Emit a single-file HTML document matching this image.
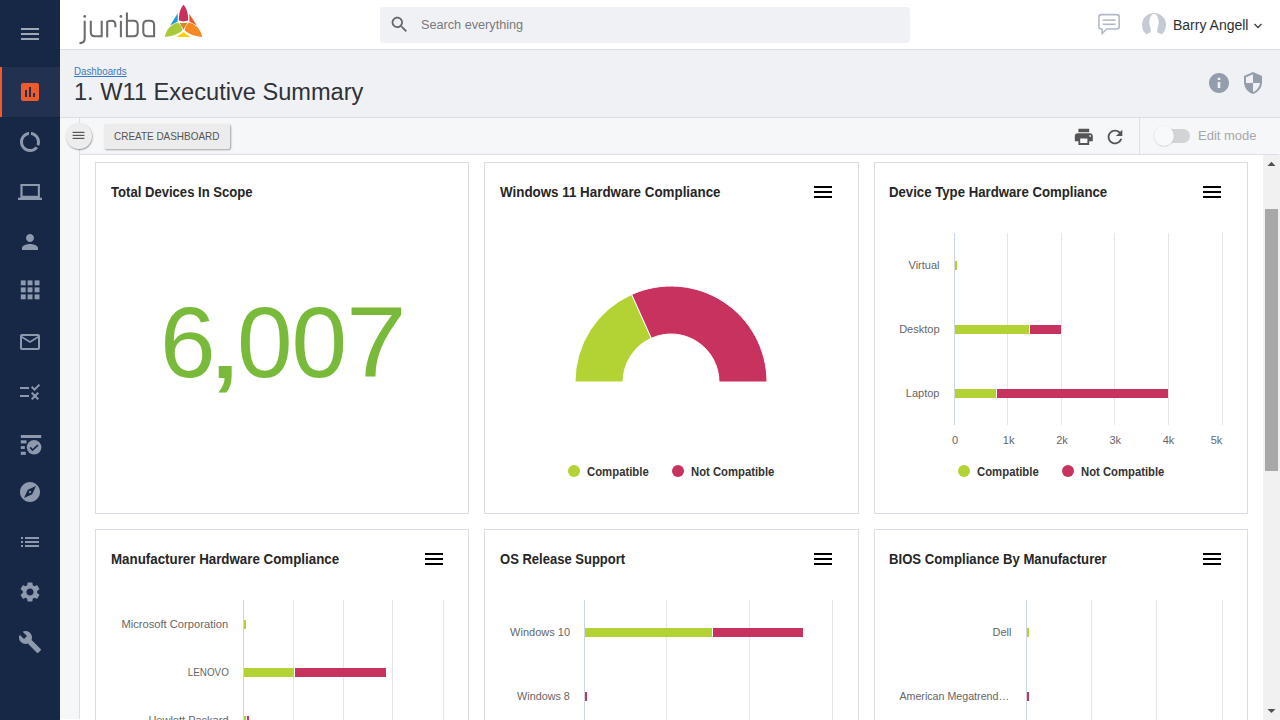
<!DOCTYPE html>
<html><head><meta charset="utf-8">
<style>
*{box-sizing:border-box;margin:0;padding:0}
html,body{width:1280px;height:720px;overflow:hidden;background:#fff;font-family:"Liberation Sans",sans-serif}
.abs{position:absolute}
#sidebar{position:absolute;left:0;top:0;width:60px;height:720px;background:#162846}
#sidebar svg{position:absolute;left:18px;width:24px;height:24px;fill:#8e99ae}
#active{position:absolute;left:0;top:67px;width:60px;height:50px;background:#22314f}
#active .bar{position:absolute;left:0;top:0;width:2px;height:50px;background:#f15a2b}
#header{position:absolute;left:60px;top:0;width:1220px;height:50px;background:#fff;border-bottom:1px solid #dcdde3}
#titlebar{position:absolute;left:60px;top:50px;width:1220px;height:68px;background:#eff1f5;border-bottom:1px solid #dcdde3}
#toolbar{position:absolute;left:60px;top:118px;width:1220px;height:601px;background:#f6f7f9}
#content{position:absolute;left:79px;top:155px;width:1184px;height:564px;background:#fff;border-left:1px solid #dcdfe5}
#tbline{position:absolute;left:79px;top:154px;width:1200px;height:1px;background:#dcdfe5}
.card{position:absolute;background:#fff;border:1px solid #dcdde4}
.ttl{position:absolute;font-weight:700;font-size:14px;color:#262626;white-space:nowrap;transform-origin:0 0}
.menu{position:absolute;width:18px;height:12px}
.menu i{position:absolute;left:0;width:18px;height:2px;background:#000}
.lbl{position:absolute;font-size:12px;color:#666;white-space:nowrap}
.grid{position:absolute;width:1px;background:#e6e6e6}
.axis{position:absolute;width:1px;background:#ccd6eb}
.bar{position:absolute}
.big{font-size:100px;color:#7aba3b;line-height:115px}
.g{background:#b3d234}
.r{background:#c8325e}
</style></head><body>

<div id="sidebar">
  <!-- menu -->
  <svg style="top:22px;fill:#a0a8b8" viewBox="0 0 24 24"><path d="M3 18h18v-2H3v2zm0-5h18v-2H3v2zm0-7v2h18V6H3z"/></svg>
  <div id="active"><div class="bar"></div></div>
  <svg style="top:80px;fill:#f15a2b" viewBox="0 0 24 24"><path d="M19 3H5c-1.1 0-2 .9-2 2v14c0 1.1.9 2 2 2h14c1.1 0 2-.9 2-2V5c0-1.1-.9-2-2-2zM9 17H7v-7h2v7zm4 0h-2V7h2v10zm4 0h-2v-4h2v4z"/></svg>
  <svg style="top:130px" viewBox="0 0 24 24"><path d="M13 2.05v3.03c3.39.49 6 3.39 6 6.92 0 .9-.18 1.75-.48 2.54l2.6 1.53c.56-1.24.88-2.62.88-4.07 0-5.18-3.95-9.45-9-9.95zM12 19c-3.87 0-7-3.13-7-7 0-3.530 2.61-6.430 6-6.920V2.05c-5.06.5-9 4.76-9 9.950 0 5.52 4.47 10 9.99 10 3.31 0 6.24-1.61 8.06-4.09l-2.6-1.53C16.17 17.98 14.21 19 12 19z"/></svg>
  <svg style="top:180px" viewBox="0 0 24 24"><path fill-rule="evenodd" d="M2.4 4h19.5v14H2.4z M4.6 6v9.8h15.2V6z"/><path d="M0 17.7h24V20H0z"/></svg>
  <svg style="top:230px" viewBox="0 0 24 24"><path d="M12 12c2.21 0 4-1.79 4-4s-1.790-4-4-4-4 1.79-4 4 1.79 4 4 4zm0 2c-2.67 0-8 1.34-8 4v2h16v-2c0-2.66-5.33-4-8-4z"/></svg>
  <svg style="top:276px;left:16px;width:28px;height:28px" viewBox="0 0 28 28"><rect x="4.8" y="4.4" width="4.9" height="4.9"/><rect x="11.6" y="4.4" width="4.9" height="4.9"/><rect x="18.6" y="4.4" width="4.9" height="4.9"/><rect x="4.8" y="11.4" width="4.9" height="4.9"/><rect x="11.6" y="11.4" width="4.9" height="4.9"/><rect x="18.6" y="11.4" width="4.9" height="4.9"/><rect x="4.8" y="18.4" width="4.9" height="4.9"/><rect x="11.6" y="18.4" width="4.9" height="4.9"/><rect x="18.6" y="18.4" width="4.9" height="4.9"/></svg>
  <svg style="top:330px" viewBox="0 0 24 24"><path d="M20 4H4c-1.1 0-1.99.9-1.99 2L2 18c0 1.1.9 2 2 2h16c1.1 0 2-.9 2-2V6c0-1.1-.9-2-2-2zm0 14H4V8l8 5 8-5v10zm-8-7L4 6h16l-8 5z"/></svg>
  <svg style="top:380px" viewBox="0 0 24 24"><path d="M16.54 11L13 7.46l1.41-1.41 2.12 2.12 4.24-4.24 1.41 1.41L16.54 11zM11 7H2v2h9V7zm10 6.41L19.59 12 17 14.59 14.41 12 13 13.41 15.59 16 13 18.59 14.41 20 17 17.41 19.59 20 21 18.59 18.41 16 21 13.41zM11 15H2v2h9v-2z"/></svg>
  <svg style="top:428px;left:15px;width:30px;height:30px" viewBox="0 0 30 30"><rect x="5.8" y="7" width="20.4" height="3"/><rect x="5.8" y="12.3" width="5.7" height="3.1"/><rect x="5.8" y="18.1" width="4" height="2.9"/><rect x="5.8" y="23.75" width="5" height="3.1"/><circle cx="19.1" cy="19.3" r="7.3"/><path d="M15.2 19.4l2.3 2.6 5.4-4.9" fill="none" stroke="#162846" stroke-width="1.6"/></svg>
  <svg style="top:480px" viewBox="0 0 24 24"><path d="M12 10.9c-.61 0-1.1.49-1.1 1.1s.49 1.1 1.1 1.1c.61 0 1.1-.49 1.1-1.1s-.49-1.1-1.1-1.1zM12 2C6.48 2 2 6.48 2 12s4.48 10 10 10 10-4.48 10-10S17.52 2 12 2zm2.19 12.19L6 18l3.81-8.19L18 6l-3.81 8.19z"/></svg>
  <svg style="top:530px" viewBox="0 0 24 24"><path d="M3 13h2v-2H3v2zm0 4h2v-2H3v2zm0-8h2V7H3v2zm4 4h14v-2H7v2zm0 4h14v-2H7v2zM7 7v2h14V7H7z"/></svg>
  <svg style="top:580px" viewBox="0 0 24 24"><path d="M19.14 12.94c.04-.3.06-.61.06-.94 0-.32-.02-.64-.07-.94l2.03-1.58c.18-.14.23-.41.12-.61l-1.92-3.32c-.12-.22-.37-.29-.59-.22l-2.39.96c-.5-.38-1.03-.7-1.62-.94l-.36-2.54c-.04-.24-.24-.41-.48-.41h-3.84c-.24 0-.43.17-.47.41l-.36 2.54c-.59.24-1.13.57-1.62.94l-2.39-.96c-.22-.08-.47 0-.59.22L2.74 8.87c-.12.21-.08.47.12.61l2.03 1.58c-.05.3-.09.63-.09.94s.02.64.07.94l-2.03 1.58c-.18.14-.23.41-.12.61l1.92 3.32c.12.22.37.29.59.22l2.39-.96c.5.38 1.03.7 1.62.94l.36 2.54c.05.24.24.41.48.41h3.84c.24 0 .44-.17.47-.41l.36-2.54c.59-.24 1.13-.56 1.62-.94l2.39.96c.22.08.47 0 .59-.22l1.92-3.32c.12-.22.07-.47-.12-.61l-2.01-1.58zM12 15.6c-1.98 0-3.6-1.62-3.6-3.6s1.62-3.6 3.6-3.6 3.6 1.62 3.6 3.6-1.62 3.6-3.6 3.6z"/></svg>
  <svg style="top:630px" viewBox="0 0 24 24"><path d="M22.7 19l-9.1-9.1c.9-2.3.4-5-1.5-6.9-2-2-5-2.4-7.4-1.3L9 6 6 9 1.6 4.7C.4 7.1.9 10.1 2.9 12.1c1.9 1.9 4.6 2.4 6.9 1.5l9.1 9.1c.4.4 1 .4 1.4 0l2.3-2.3c.5-.4.5-1.100.1-1.400z"/></svg>
</div>

<div id="header">
  <svg class="abs" style="left:0;top:0" width="160" height="50" viewBox="60 0 160 50">
    <g fill="none" stroke="#6b6c6f" stroke-width="2.05" stroke-linecap="butt">
      <path d="M84.7 20.8V38.5c0 3-1.8 4.6-5.2 4.6"/>
      <path d="M90.8 20.8V32.2c0 2.6 1.4 4 4 4H101.7M101.7 20.8V37.3"/>
      <path d="M107.2 37.3V21.8c1.5-.8 3-1 4.2-1 2.6 0 4 1.6 4 4.3V27.3"/>
      <path d="M120.9 20.8V37.3"/>
      <path d="M126.9 12.6V36.2h6.6c2.6 0 4.2-1.6 4.2-4.2V25c0-2.6-1.6-4.2-4.2-4.2H126.9"/>
      <path d="M154.1 37.3V25c0-2.6-1.6-4.2-4.2-4.2H147.5c-2.6 0-4.2 1.6-4.2 4.2V32c0 2.6 1.6 4.2 4.2 4.2H154.1"/>
    </g>
    <circle cx="84.7" cy="16.4" r="1.35" fill="#6b6c6f"/>
    <circle cx="120.9" cy="16.4" r="1.35" fill="#6b6c6f"/>
    <polygon points="177.7,13.3 170.2,25.6 177.7,21.6" fill="#1b9ad6"/>
    <polygon points="189.3,13.7 196.8,25.6 189.3,21.6" fill="#ef5b2d"/>
    <polygon points="176.6,36.9 190.4,36.9 183.5,31.9" fill="#fdd300"/>
    <path d="M183.5 4.8C180 9 178.7 14 178.9 20.6Q183.5 22.2 188.1 20.6C188.3 14 187 9 183.5 4.8Z" fill="#c8305f"/>
    <path d="M179.4 22.4Q183.5 23.6 187.6 22.4L183.5 29.8Z" fill="#d18a22"/>
    <path d="M164.8 36.9C166.5 29 171.5 24.3 178.1 22.6C180.6 24.8 181.9 27.4 182.4 30.4C178 34.3 172 36.5 164.8 36.9Z" fill="#a8c93a"/>
    <path d="M202.2 36.9C200.5 29 195.5 24.3 188.9 22.6C186.4 24.8 185.1 27.4 184.6 30.4C189 34.3 195 36.5 202.2 36.9Z" fill="#f58a23"/>
  </svg>
  <div class="abs" style="left:320px;top:7px;width:530px;height:36px;background:#eff1f5;border-radius:3px"></div>
  <svg class="abs" style="left:329.3px;top:14px" width="21" height="21" viewBox="0 0 24 24"><path fill="#666" d="M15.5 14h-.79l-.28-.27C15.41 12.59 16 11.11 16 9.5 16 5.91 13.09 3 9.5 3S3 5.91 3 9.5 5.910 16 9.5 16c1.61 0 3.09-.59 4.23-1.57l.27.28v.79l5 4.99L20.49 19l-4.99-5zm-6 0C7.01 14 5 11.99 5 9.5S7.01 5 9.5 5 14 7.01 14 9.5 11.99 14 9.5 14z"/></svg>
  <div class="abs" style="left:361px;top:17px;font-size:13px;color:#7a7a7a;white-space:nowrap;transform:scaleX(.975);transform-origin:0 0">Search everything</div>
  <svg class="abs" style="left:1036px;top:13px" width="26" height="23" viewBox="0 0 26 23"><path d="M5.4 1.6h15.3c1.5 0 2.5 1 2.5 2.5v9.4c0 1.5-1 2.5-2.5 2.5H10.6L6 20.8V16H5.4c-1.5 0-2.5-1-2.5-2.5V4.1c0-1.5 1-2.5 2.5-2.5Z" fill="none" stroke="#b3bac7" stroke-width="1.6" stroke-linejoin="round"/><rect x="6.7" y="6.3" width="12.9" height="1.6" fill="#b3bac7"/><rect x="6.7" y="10.5" width="12.9" height="1.6" fill="#b3bac7"/></svg>
  <svg class="abs" style="left:1080px;top:10px" width="28" height="28" viewBox="0 0 28 28"><circle cx="14" cy="15" r="12" fill="#c5cbd5"/><ellipse cx="14" cy="12.2" rx="4.7" ry="8.1" fill="#fff"/><rect x="10.7" y="15" width="6.6" height="9" fill="#fff"/><ellipse cx="14" cy="30.5" rx="11.5" ry="8.3" fill="#fff"/></svg>
  <div class="abs" style="left:1113px;top:16.5px;font-size:14px;color:#2b2f36;white-space:nowrap">Barry Angell</div>
  <svg class="abs" style="left:1193px;top:22px" width="10" height="8" viewBox="0 0 10 8"><path d="M1.5 2l3.5 3.5L8.5 2" fill="none" stroke="#444" stroke-width="1.4"/></svg>
</div>
<div id="titlebar">
  <div class="abs" style="left:14px;top:15px;font-size:10.5px;color:#3b78c4;text-decoration:underline;white-space:nowrap;transform:scaleX(.93);transform-origin:0 0">Dashboards</div>
  <div class="abs" style="left:14px;top:29px;font-size:23px;color:#2f3237;white-space:nowrap;transform:scaleX(1.026);transform-origin:0 0">1. W11 Executive Summary</div>
  <svg class="abs" style="left:1147px;top:21px" width="24" height="24" viewBox="0 0 24 24"><path fill="#949dab" d="M12 2C6.48 2 2 6.480 2 12s4.48 10 10 10 10-4.48 10-10S17.52 2 12 2zm1.3 15h-2.6v-6h2.6v6zm0-8h-2.6V6.8h2.6V9z"/></svg>
  <svg class="abs" style="left:1181px;top:21px" width="24" height="24" viewBox="0 0 24 24"><path fill="#949dab" d="M12 1L3 5v6c0 5.55 3.84 10.74 9 12 5.16-1.26 9-6.45 9-12V5l-9-4zm0 10.99h7c-.53 4.12-3.28 7.79-7 8.94V12H5V6.3l7-3.11v8.8z"/></svg>
</div>
<div id="toolbar">
  <div class="abs" style="left:19px;top:0;width:1px;height:37px;background:#dcdfe5"></div>
  <div class="abs" style="left:6px;top:5px;width:25.5px;height:25.5px;border-radius:50%;background:#ededed;box-shadow:0.5px 1px 1.5px rgba(0,0,0,.38)"></div>
  <svg class="abs" style="left:12px;top:12px" width="13" height="10" viewBox="0 0 13 10"><rect x="0.6" y="1.8" width="11.8" height="1.2" fill="#555"/><rect x="0.6" y="4.8" width="11.8" height="1.2" fill="#555"/><rect x="0.6" y="7.8" width="11.8" height="1.2" fill="#555"/></svg>
  <div class="abs" style="left:44px;top:6px;width:126px;height:25px;background:#ececec;border-radius:2px;box-shadow:1px 1px 2px rgba(0,0,0,.35)"></div>
  <div class="abs" style="left:54px;top:12px;font-size:11px;color:#555;white-space:nowrap;transform:scaleX(.905);transform-origin:0 0">CREATE DASHBOARD</div>
  <svg class="abs" style="left:1013px;top:7.5px" width="21.6" height="21.6" viewBox="0 0 24 24"><path fill="#555" d="M19 8H5c-1.66 0-3 1.340-3 3v6h4v4h12v-4h4v-6c0-1.66-1.34-3-3-3zm-3 11H8v-5h8v5zm3-7c-.55 0-1-.45-1-1s.45-1 1-1 1 .45 1 1-.45 1-1 1zm-1-9H6v4h12V3z"/></svg>
  <svg class="abs" style="left:1044px;top:8px" width="22" height="22" viewBox="0 0 24 24"><path fill="#555" d="M17.65 6.35C16.2 4.9 14.21 4 12 4c-4.42 0-7.99 3.58-7.99 8s3.57 8 7.99 8c3.73 0 6.84-2.55 7.73-6h-2.08c-.82 2.33-3.04 4-5.65 4-3.31 0-6-2.69-6-6s2.69-6 6-6c1.66 0 3.14.69 4.22 1.78L13 11h7V4l-2.35 2.35z"/></svg>
  <div class="abs" style="left:1079px;top:0;width:1px;height:37px;background:#dcdfe5"></div>
  <div class="abs" style="left:1096px;top:11px;width:34px;height:14px;border-radius:7px;background:#d3d4d6"></div>
  <div class="abs" style="left:1094px;top:8px;width:20px;height:20px;border-radius:50%;background:#f8f9fa;box-shadow:0 0.5px 1.5px rgba(0,0,0,.2)"></div>
  <div class="abs" style="left:1138px;top:10px;font-size:13px;color:#a8a8a8;white-space:nowrap">Edit mode</div>
</div>
<div id="content"></div>
<div id="tbline"></div>
<!--CARDS-->
<div class="card" style="left:95px;top:162px;width:374px;height:352px"></div>
<div class="card" style="left:484px;top:162px;width:375px;height:352px"></div>
<div class="card" style="left:874px;top:162px;width:374px;height:352px"></div>
<div class="card" style="left:95px;top:529px;width:374px;height:260px"></div>
<div class="card" style="left:484px;top:529px;width:375px;height:260px"></div>
<div class="card" style="left:874px;top:529px;width:374px;height:260px"></div>
<div class="ttl" style="left:111px;top:184px;transform:scaleX(0.935)">Total Devices In Scope</div>
<div class="abs big" style="left:160px;top:285px;">6</div>
<div class="abs big" style="left:210.5px;top:285px;transform:scale(1.35,1.12);transform-origin:50% 75%;">,</div>
<div class="abs big" style="left:237px;top:285px;">0</div>
<div class="abs big" style="left:291.5px;top:285px;">0</div>
<div class="abs big" style="left:345.5px;top:285px;transform:scaleX(1.09);transform-origin:0 0;">7</div>
<div class="ttl" style="left:500px;top:184px;transform:scaleX(0.955)">Windows 11 Hardware Compliance</div>
<div class="menu" style="left:814px;top:186px"><i style="top:0"></i><i style="top:5px"></i><i style="top:10px"></i></div>
<svg class="abs" style="left:0;top:0" width="1280" height="720" viewBox="0 0 1280 720">
<path d="M575 382 A96 96 0 0 1 631.65 294.44 L651.32 338.22 A48 48 0 0 0 623 382 Z" fill="#b3d234" stroke="#fff" stroke-width="1" stroke-linejoin="round"/>
<path d="M631.65 294.44 A96 96 0 0 1 767 382 L719 382 A48 48 0 0 0 651.32 338.22 Z" fill="#c8325e" stroke="#fff" stroke-width="1" stroke-linejoin="round"/>
</svg>
<div class="abs" style="left:568px;top:465px;width:12px;height:12px;border-radius:50%;background:#b3d234"></div>
<div class="lbl" style="left:587px;top:465px;font-size:12px;font-weight:700;color:#333;transform:scaleX(.945);transform-origin:0 0">Compatible</div>
<div class="abs" style="left:671.5px;top:465px;width:12px;height:12px;border-radius:50%;background:#c8325e"></div>
<div class="lbl" style="left:690.8px;top:465px;font-size:12px;font-weight:700;color:#333;transform:scaleX(.94);transform-origin:0 0">Not Compatible</div>
<div class="ttl" style="left:889px;top:184px;transform:scaleX(0.942)">Device Type Hardware Compliance</div>
<div class="menu" style="left:1203px;top:186px"><i style="top:0"></i><i style="top:5px"></i><i style="top:10px"></i></div>
<div class="abs" style="left:954px;top:232.5px;width:1px;height:192.5px;background:#ccd6eb"></div>
<div class="abs" style="left:1007px;top:232.5px;width:1px;height:192.5px;background:#e6e6e6"></div>
<div class="abs" style="left:1061px;top:232.5px;width:1px;height:192.5px;background:#e6e6e6"></div>
<div class="abs" style="left:1114px;top:232.5px;width:1px;height:192.5px;background:#e6e6e6"></div>
<div class="abs" style="left:1168px;top:232.5px;width:1px;height:192.5px;background:#e6e6e6"></div>
<div class="abs" style="left:1222px;top:232.5px;width:1px;height:192.5px;background:#e6e6e6"></div>
<div class="lbl" style="left:925px;width:60px;text-align:center;top:434px;font-size:11px;color:#666">0</div>
<div class="lbl" style="left:978.6px;width:60px;text-align:center;top:434px;font-size:11px;color:#666">1k</div>
<div class="lbl" style="left:1032px;width:60px;text-align:center;top:434px;font-size:11px;color:#666">2k</div>
<div class="lbl" style="left:1085.2px;width:60px;text-align:center;top:434px;font-size:11px;color:#666">3k</div>
<div class="lbl" style="left:1138.5px;width:60px;text-align:center;top:434px;font-size:11px;color:#666">4k</div>
<div class="lbl" style="left:1186.5px;width:60px;text-align:center;top:434px;font-size:11px;color:#666">5k</div>
<div class="lbl" style="right:340.5px;top:259px;font-size:11px;color:#666;transform:scaleX(1.0);transform-origin:100% 0">Virtual</div>
<div class="lbl" style="right:340.5px;top:323px;font-size:11px;color:#666;transform:scaleX(1.0);transform-origin:100% 0">Desktop</div>
<div class="lbl" style="right:340.5px;top:387px;font-size:11px;color:#666;transform:scaleX(1.0);transform-origin:100% 0">Laptop</div>
<div class="abs" style="left:955px;top:261px;width:2.2px;height:9px;background:#b3d234"></div>
<div class="abs" style="left:955px;top:325px;width:74px;height:9px;background:#b3d234"></div>
<div class="abs" style="left:1030px;top:325px;width:31px;height:9px;background:#c8325e"></div>
<div class="abs" style="left:955px;top:389px;width:41.3px;height:9px;background:#b3d234"></div>
<div class="abs" style="left:997px;top:389px;width:171px;height:9px;background:#c8325e"></div>
<div class="abs" style="left:958px;top:465px;width:12px;height:12px;border-radius:50%;background:#b3d234"></div>
<div class="lbl" style="left:977px;top:465px;font-size:12px;font-weight:700;color:#333;transform:scaleX(.945);transform-origin:0 0">Compatible</div>
<div class="abs" style="left:1061.5px;top:465px;width:12px;height:12px;border-radius:50%;background:#c8325e"></div>
<div class="lbl" style="left:1080.8px;top:465px;font-size:12px;font-weight:700;color:#333;transform:scaleX(.94);transform-origin:0 0">Not Compatible</div>
<div class="ttl" style="left:111px;top:551px;transform:scaleX(0.952)">Manufacturer Hardware Compliance</div>
<div class="menu" style="left:424.5px;top:553px"><i style="top:0"></i><i style="top:5px"></i><i style="top:10px"></i></div>
<div class="abs" style="left:243px;top:600px;width:1px;height:120px;background:#ccd6eb"></div>
<div class="abs" style="left:293px;top:600px;width:1px;height:120px;background:#e6e6e6"></div>
<div class="abs" style="left:343px;top:600px;width:1px;height:120px;background:#e6e6e6"></div>
<div class="abs" style="left:392px;top:600px;width:1px;height:120px;background:#e6e6e6"></div>
<div class="abs" style="left:443px;top:600px;width:1px;height:120px;background:#e6e6e6"></div>
<div class="lbl" style="right:1051.5px;top:618px;font-size:11px;color:#666;transform:scaleX(1.015);transform-origin:100% 0">Microsoft Corporation</div>
<div class="lbl" style="right:1051.5px;top:666px;font-size:11px;color:#666;transform:scaleX(0.895);transform-origin:100% 0">LENOVO</div>
<div class="lbl" style="right:1051.5px;top:714px;font-size:11px;color:#666;transform:scaleX(1.0);transform-origin:100% 0">Hewlett Packard</div>
<div class="abs" style="left:244px;top:620px;width:2px;height:9px;background:#b3d234"></div>
<div class="abs" style="left:244px;top:668px;width:50px;height:9px;background:#b3d234"></div>
<div class="abs" style="left:295px;top:668px;width:91px;height:9px;background:#c8325e"></div>
<div class="abs" style="left:244px;top:716px;width:2px;height:9px;background:#b3d234"></div>
<div class="abs" style="left:247px;top:716px;width:2px;height:9px;background:#c8325e"></div>
<div class="ttl" style="left:500px;top:551px;transform:scaleX(0.93)">OS Release Support</div>
<div class="menu" style="left:813.5px;top:553px"><i style="top:0"></i><i style="top:5px"></i><i style="top:10px"></i></div>
<div class="abs" style="left:584px;top:600px;width:1px;height:120px;background:#ccd6eb"></div>
<div class="abs" style="left:666px;top:600px;width:1px;height:120px;background:#e6e6e6"></div>
<div class="abs" style="left:749px;top:600px;width:1px;height:120px;background:#e6e6e6"></div>
<div class="abs" style="left:832px;top:600px;width:1px;height:120px;background:#e6e6e6"></div>
<div class="lbl" style="right:710px;top:626px;font-size:11px;color:#666;transform:scaleX(1.0);transform-origin:100% 0">Windows 10</div>
<div class="lbl" style="right:710px;top:689.5px;font-size:11px;color:#666;transform:scaleX(0.98);transform-origin:100% 0">Windows 8</div>
<div class="abs" style="left:585px;top:628px;width:127px;height:9px;background:#b3d234"></div>
<div class="abs" style="left:713px;top:628px;width:90px;height:9px;background:#c8325e"></div>
<div class="abs" style="left:585px;top:692px;width:2px;height:9px;background:#c8325e"></div>
<div class="ttl" style="left:889px;top:551px;transform:scaleX(0.939)">BIOS Compliance By Manufacturer</div>
<div class="menu" style="left:1203px;top:553px"><i style="top:0"></i><i style="top:5px"></i><i style="top:10px"></i></div>
<div class="abs" style="left:1026px;top:600px;width:1px;height:120px;background:#ccd6eb"></div>
<div class="abs" style="left:1091px;top:600px;width:1px;height:120px;background:#e6e6e6"></div>
<div class="abs" style="left:1156px;top:600px;width:1px;height:120px;background:#e6e6e6"></div>
<div class="abs" style="left:1222px;top:600px;width:1px;height:120px;background:#e6e6e6"></div>
<div class="lbl" style="right:268.5px;top:626px;font-size:11px;color:#666;transform:scaleX(1.0);transform-origin:100% 0">Dell</div>
<div class="lbl" style="right:271px;top:689.5px;font-size:11px;color:#666;transform:scaleX(0.97);transform-origin:100% 0">American Megatrend…</div>
<div class="abs" style="left:1027px;top:628px;width:2px;height:9px;background:#b3d234"></div>
<div class="abs" style="left:1027px;top:692px;width:2px;height:9px;background:#c8325e"></div>
<!--/CARDS-->
<div id="scrollbar" class="abs" style="left:1263px;top:155px;width:17px;height:565px;background:#f1f1f1">
  <svg class="abs" style="left:0;top:0" width="17" height="565" viewBox="0 0 17 565"><polygon points="4.5,11 8.5,6.8 12.5,11" fill="#505050"/><polygon points="4.5,554 8.5,558 12.5,554" fill="#505050"/></svg>
  <div class="abs" style="left:2px;top:54px;width:13px;height:262px;background:#a8a8a8"></div>
</div>

</body></html>
